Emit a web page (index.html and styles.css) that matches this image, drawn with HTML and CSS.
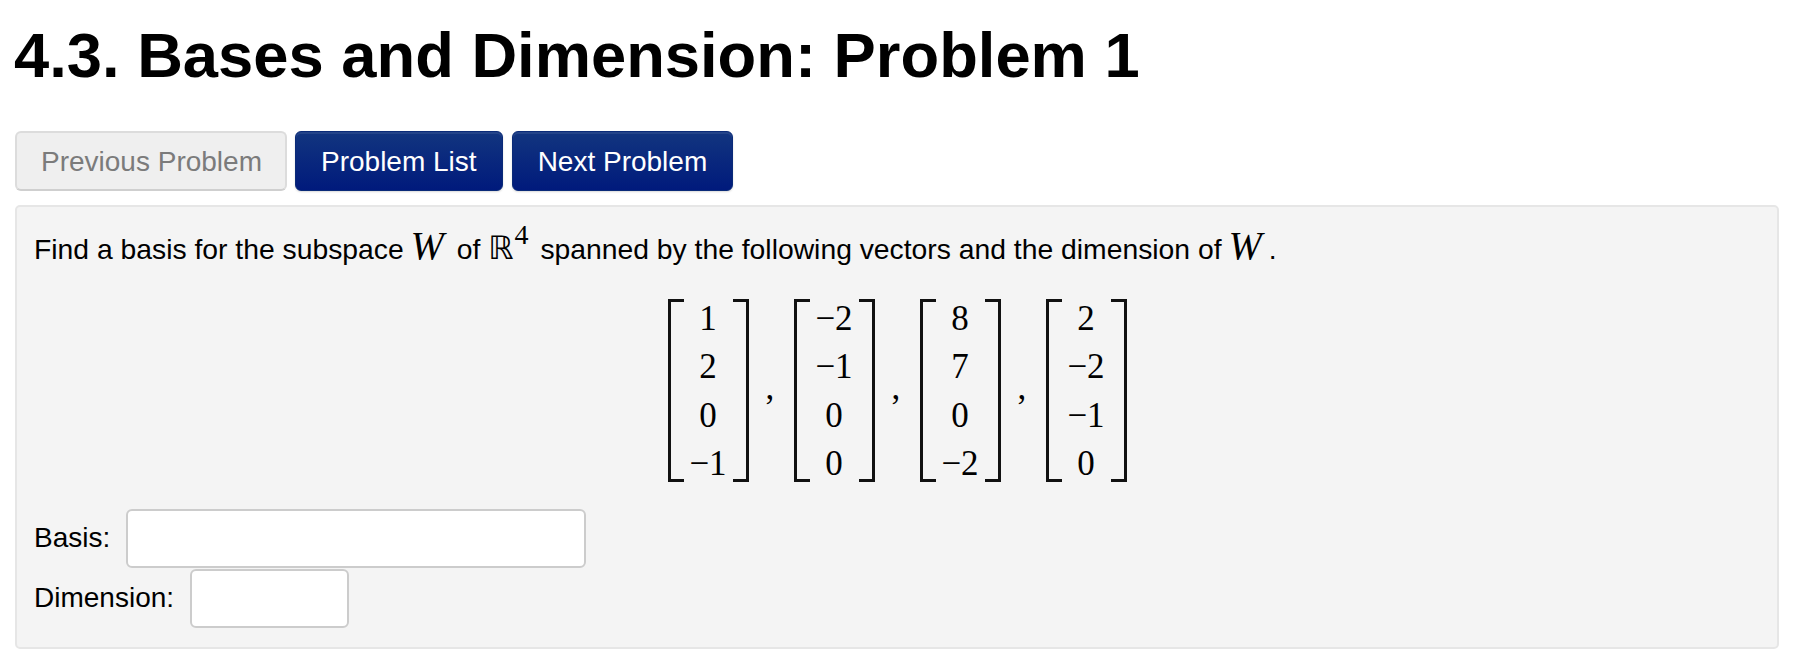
FILE: index.html
```html
<!doctype html>
<html lang="en">

<head>
  <meta charset="UTF-8" />
  <title>4.3. Bases and Dimension: Problem 1</title>
  <link rel="stylesheet" href="styles.css">
</head>

<body>
  <h1 class="title">4.3. Bases and Dimension: Problem 1</h1>
  <div class="nav">
    <a class="btn disabled">Previous Problem</a>
    <a class="btn primary">Problem List</a>
    <a class="btn primary">Next Problem</a>
  </div>
  <div class="problem">
    <p class="statement">Find a basis for the subspace <span class="var">W</span> of <span class="reals">ℝ</span><sup class="power">4</sup> spanned by the following vectors and the dimension of <span class="var">W</span><span class="stop">.</span></p>
    <div class="display">
      <div class="matrix"><span>1</span><span>2</span><span>0</span><span>−1</span></div>
      <span class="comma">,</span>
      <div class="matrix"><span>−2</span><span>−1</span><span>0</span><span>0</span></div>
      <span class="comma">,</span>
      <div class="matrix"><span>8</span><span>7</span><span>0</span><span>−2</span></div>
      <span class="comma">,</span>
      <div class="matrix"><span>2</span><span>−2</span><span>−1</span><span>0</span></div>
    </div>
    <div class="answer">
      <label class="answer-label">Basis:</label>
      <input type="text" class="field field-wide">
    </div>
    <div class="answer">
      <label class="answer-label">Dimension:</label>
      <input type="text" class="field field-small">
    </div>
  </div>
</body>

</html>
```

FILE: styles.css
```css
* {
  margin: 0;
  padding: 0;
  box-sizing: border-box;
}

body {
  background-color: #ffffff;
  color: #000000;
  font-family: "Liberation Sans", Arial, sans-serif;
  font-size: 28px;
  padding: 0 26px 0 15px;
  height: 671px;
  overflow: hidden;
}

.title {
  font-size: 63.3px;
  font-weight: 700;
  line-height: 70px;
  padding-top: 20px;
  margin-left: -1px;
}

.nav {
  display: flex;
  gap: 9px;
  margin-top: 41px;
}

.btn {
  display: flex;
  align-items: center;
  height: 60px;
  padding: 2px 25px 0;
  border-radius: 6px;
  font-size: 28px;
  white-space: nowrap;
}

.btn.disabled {
  width: 272px;
  padding-left: 24px;
  margin-right: -1px;
  background-color: #efefef;
  border: 2px solid #dcdcdc;
  border-bottom-color: #cfcfcf;
  color: #7b7b7b;
}

.btn.primary {
  background: linear-gradient(#12357f, #001a7c);
  border: 1px solid #0a2a78;
  box-shadow: inset 0 2px 0 rgba(255, 255, 255, 0.08), 0 1px 2px rgba(0, 0, 0, 0.15);
  color: #ffffff;
}

.problem {
  margin-top: 14px;
  height: 444px;
  padding: 22px 17px 0;
  background-color: #f4f4f4;
  border: 2px solid #e6e6e6;
  border-radius: 5px;
}

.statement {
  font-size: 28.3px;
  line-height: 40px;
  white-space: nowrap;
}

.var {
  font-family: "Liberation Serif", serif;
  font-style: italic;
  font-size: 40px;
  line-height: 0;
  margin: 0 5px 0 -1px;
}

.reals {
  font-family: "DejaVu Sans", sans-serif;
  font-size: 32px;
  line-height: 0;
}

.power {
  font-family: "Liberation Serif", serif;
  font-size: 28px;
  line-height: 0;
  vertical-align: 15px;
  margin: 0 4px 0 1px;
}

.stop {
  margin-left: 2px;
}

.display {
  display: flex;
  justify-content: center;
  align-items: center;
  gap: 14px;
  margin-top: 30px;
  font-family: "Liberation Serif", serif;
  font-size: 35px;
}

.matrix {
  position: relative;
  display: grid;
  grid-auto-rows: 48.5px;
  justify-items: center;
  align-items: center;
  align-content: center;
  width: 81px;
  height: 183px;
  padding-top: 2px;
}

.matrix::before,
.matrix::after {
  content: "";
  position: absolute;
  top: 0;
  bottom: 0;
  width: 13px;
  border: 3px solid #111111;
}

.matrix::before {
  left: 0;
  border-right: none;
}

.matrix::after {
  right: 0;
  border-left: none;
}

.comma {
  width: 17px;
  padding-left: 3px;
  margin-top: -6px;
}

.answer {
  display: flex;
  align-items: center;
  gap: 16px;
  height: 60px;
}

.display + .answer {
  margin-top: 26px;
}

.field {
  height: 59px;
  background-color: #ffffff;
  border: 2px solid #cccccc;
  border-radius: 6px;
}

.field-wide {
  width: 460px;
}

.field-small {
  width: 159px;
}
```
